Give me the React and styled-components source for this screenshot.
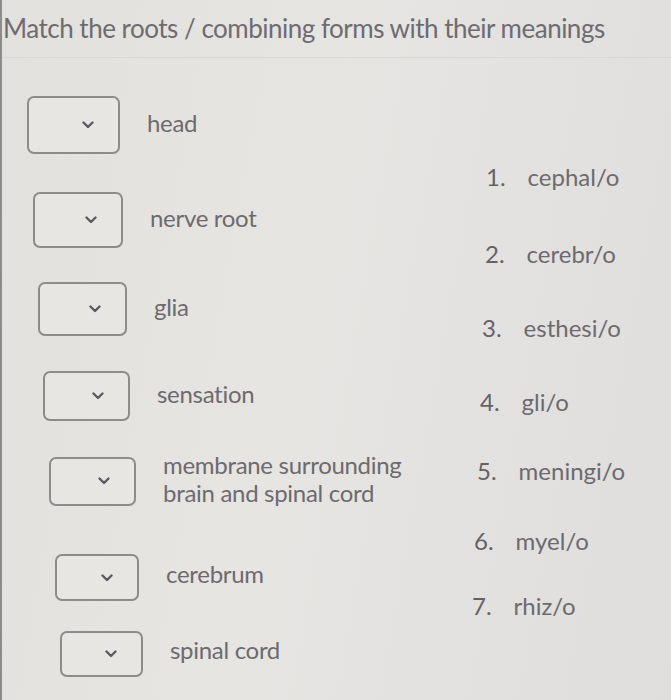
import React from 'react'
import styled, { createGlobalStyle } from 'styled-components'

const GlobalStyle = createGlobalStyle`
  html, body {
    margin: 0;
    padding: 0;
  }
  body {
    font-family: Lato, 'Open Sans', sans-serif;
    background: #e4e2df;
  }
`

const meanings = [
  { label: ['head'], indent: 27, w: 93, h: 58, gap: 0 },
  { label: ['nerve root'], indent: 33, w: 90, h: 56, gap: 38 },
  { label: ['glia'], indent: 38, w: 89, h: 54, gap: 34 },
  { label: ['sensation'], indent: 43, w: 87, h: 50, gap: 35 },
  { label: ['membrane surrounding', 'brain and spinal cord'], indent: 49, w: 87, h: 49, gap: 34 },
  { label: ['cerebrum'], indent: 55, w: 84, h: 47, gap: 47 },
  { label: ['spinal cord'], indent: 60, w: 83, h: 46, gap: 30 },
]

const roots = [
  { text: 'cephal/o', indent: 44, gap: 0 },
  { text: 'cerebr/o', indent: 43, gap: 47 },
  { text: 'esthesi/o', indent: 40, gap: 44 },
  { text: 'gli/o', indent: 38, gap: 44 },
  { text: 'meningi/o', indent: 35, gap: 39 },
  { text: 'myel/o', indent: 32, gap: 40 },
  { text: 'rhiz/o', indent: 30, gap: 35 },
]

const Chevron = () => (
  <svg width="12" height="8" viewBox="0 0 12 8">
    <path d="M1.5 1.5 L6 6 L10.5 1.5" fill="none" stroke="#5c5a5e" strokeWidth="2.4" strokeLinecap="round" strokeLinejoin="round" />
  </svg>
)

const App = () => {
  return (
    <Page>
      <GlobalStyle />
      <Title>Match the roots / combining forms with their meanings</Title>
      <Body>
        <Meanings>
          {meanings.map((m, i) => (
            <Row key={i} $indent={m.indent} $gap={m.gap}>
              <Select $w={m.w} $h={m.h}>
                <Chevron />
              </Select>
              <Label $lift={i > 4 ? 8 : 4}>
                {m.label.map((line) => (
                  <span key={line}>{line}</span>
                ))}
              </Label>
            </Row>
          ))}
        </Meanings>
        <Roots>
          {roots.map((r, i) => (
            <Root key={r.text} $indent={r.indent} $gap={r.gap}>
              <Num>{i + 1}.</Num>
              <Term>{r.text}</Term>
            </Root>
          ))}
        </Roots>
      </Body>
    </Page>
  )
}

const Page = styled.div`
  width: 671px;
  height: 700px;
  box-sizing: border-box;
  border-left: 2px solid #8d8c8c;
  background: linear-gradient(100deg, #e3e1de 0%, #e7e5e2 45%, #e2e1df 75%, #dfdedc 100%);
  color: #6d6a6f;
  overflow: hidden;
`

const Title = styled.h1`
  margin: 0;
  height: 58px;
  box-sizing: border-box;
  padding: 12px 0 0 1px;
  font-size: 26px;
  font-weight: 400;
  letter-spacing: -0.5px;
  color: #6e6b71;
  border-bottom: 1px solid #dad8d5;
`

const Body = styled.div`
  display: flex;
`

const Meanings = styled.div`
  width: 440px;
  padding-top: 38px;
  display: flex;
  flex-direction: column;
`

const Row = styled.div`
  display: flex;
  align-items: center;
  gap: 27px;
  margin-left: ${(p) => p.$indent - 2}px;
  margin-top: ${(p) => p.$gap}px;
`

const Select = styled.div`
  width: ${(p) => p.$w}px;
  height: ${(p) => p.$h}px;
  box-sizing: border-box;
  flex-shrink: 0;
  border: 2px solid #8e8c8b;
  border-radius: 7px;
  background: #e8e6e3;
  display: flex;
  align-items: center;
  justify-content: flex-end;
  padding-right: 24px;
`

const Label = styled.div`
  display: flex;
  flex-direction: column;
  font-size: 24px;
  line-height: 28px;
  letter-spacing: -0.3px;
  margin-top: -${(p) => p.$lift}px;
  color: #6d6a6f;
`

const Roots = styled.ol`
  list-style: none;
  margin: 0;
  padding: 104px 0 0 0;
  display: flex;
  flex-direction: column;
`

const Root = styled.li`
  display: flex;
  align-items: baseline;
  gap: 22px;
  height: 30px;
  margin-left: ${(p) => p.$indent}px;
  margin-top: ${(p) => p.$gap}px;
  font-size: 24px;
  line-height: 30px;
`

const Num = styled.span`
  color: #656266;
  font-weight: 400;
`

const Term = styled.span`
  color: #6d6a6f;
`

export default App
